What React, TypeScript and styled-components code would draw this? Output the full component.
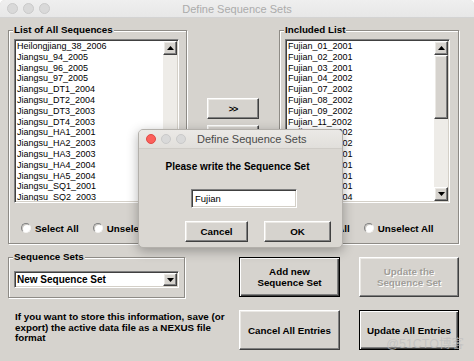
import React from "react";
import styled, { createGlobalStyle, css } from "styled-components";

const GlobalStyle = createGlobalStyle`
  html, body {
    margin: 0;
    padding: 0;
    background: #ffffff;
  }
  body {
    font-family: "Liberation Sans", Arial, sans-serif;
  }
`;

const allSequences = [
  "Heilongjiang_38_2006",
  "Jiangsu_94_2005",
  "Jiangsu_96_2005",
  "Jiangsu_97_2005",
  "Jiangsu_DT1_2004",
  "Jiangsu_DT2_2004",
  "Jiangsu_DT3_2003",
  "Jiangsu_DT4_2003",
  "Jiangsu_HA1_2001",
  "Jiangsu_HA2_2003",
  "Jiangsu_HA3_2003",
  "Jiangsu_HA4_2004",
  "Jiangsu_HA5_2004",
  "Jiangsu_SQ1_2001",
  "Jiangsu_SQ2_2003",
];

const includedList = [
  "Fujian_01_2001",
  "Fujian_02_2001",
  "Fujian_03_2001",
  "Fujian_04_2002",
  "Fujian_07_2002",
  "Fujian_08_2002",
  "Fujian_09_2002",
  "Fujian_11_2002",
  "Fujian_12_2002",
  "Fujian_13_2002",
  "Fujian_14_2001",
  "Fujian_15_2001",
  "Fujian_16_2001",
  "Fujian_17_2001",
  "Fujian_18_2004",
];

const FACE = "#d6d3ce";

const raised = css`
  background: ${FACE};
  border: 1px solid;
  border-color: #ffffff #404040 #404040 #ffffff;
  box-shadow: inset -1px -1px #808080, inset 1px 1px #ebe9e5;
  box-sizing: border-box;
`;

const sunken = css`
  background: #ffffff;
  border: 1px solid;
  border-color: #808080 #ffffff #ffffff #808080;
  box-shadow: inset 1px 1px #404040, inset -1px -1px #d4d0c8;
  box-sizing: border-box;
`;

function Arrow({ down }: { down?: boolean }) {
  return (
    <svg width="7" height="4" viewBox="0 0 7 4">
      <path d={down ? "M0 0h7L3.5 4z" : "M0 4h7L3.5 0z"} fill="#000" />
    </svg>
  );
}

function ListPanel({
  items,
  thumbTop,
  thumbHeight,
}: {
  items: string[];
  thumbTop: number;
  thumbHeight: number;
}) {
  return (
    <ListBox>
      <Items>
        {items.map((item) => (
          <Item key={item}>{item}</Item>
        ))}
      </Items>
      <ScrollBar>
        <ScrollButton>
          <Arrow />
        </ScrollButton>
        <Track $h={thumbTop} />
        <Thumb $h={thumbHeight} />
        <Track $grow />
        <ScrollButton>
          <Arrow down />
        </ScrollButton>
      </ScrollBar>
    </ListBox>
  );
}

function SelectRow() {
  return (
    <RadioRow>
      <RadioLabel>
        <RadioDot />
        Select All
      </RadioLabel>
      <RadioLabel>
        <RadioDot />
        Unselect All
      </RadioLabel>
    </RadioRow>
  );
}

export default function App() {
  return (
    <>
      <GlobalStyle />
      <Window>
        <TitleBar>
          <Lights>
            <Light />
            <Light />
            <Light />
          </Lights>
          <WindowTitle>Define Sequence Sets</WindowTitle>
          <span />
        </TitleBar>

        <Body>
          <TopRow>
            <GroupBox $w={179} $h={220}>
              <Legend>List of All Sequences</Legend>
              <ListPanel items={allSequences} thumbTop={75} thumbHeight={60} />
              <SelectRow />
            </GroupBox>

            <MoveColumn>
              <MoveButton>&gt;&gt;</MoveButton>
              <MoveButton>&lt;&lt;</MoveButton>
            </MoveColumn>

            <GroupBox $w={180} $h={220}>
              <Legend>Included List</Legend>
              <ListPanel items={includedList} thumbTop={0} thumbHeight={64} />
              <SelectRow />
            </GroupBox>
          </TopRow>

          <BottomRow>
            <LeftColumn>
              <GroupBox $w={177} $h={47} $pt={8}>
                <Legend>Sequence Sets</Legend>
                <Combo>
                  <ComboText>New Sequence Set</ComboText>
                  <ComboButton>
                    <Arrow down />
                  </ComboButton>
                </Combo>
              </GroupBox>
              <Info>
                If you want to store this information, save (or export) the
                active data file as a NEXUS file format
              </Info>
            </LeftColumn>

            <ButtonGrid>
              <PushButton $default>
                Add new
                <br />
                Sequence Set
              </PushButton>
              <PushButton $disabled>
                Update the
                <br />
                Sequence Set
              </PushButton>
              <PushButton>Cancel All Entries</PushButton>
              <PushButton $default>Update All Entries</PushButton>
            </ButtonGrid>
          </BottomRow>
        </Body>

        <Dialog>
          <DialogTitleBar>
            <DialogLights>
              <Light $color="#fc605b" $edge="#de4a45" $size={10} />
              <Light $size={10} />
              <Light $size={10} />
            </DialogLights>
            <DialogTitle>Define Sequence Sets</DialogTitle>
          </DialogTitleBar>
          <DialogBody>
            <Prompt>Please write the Sequence Set</Prompt>
            <NameInput>Fujian</NameInput>
            <DialogButtons>
              <PushButton $w={63} $h={21}>
                Cancel
              </PushButton>
              <PushButton $w={67} $h={21}>
                OK
              </PushButton>
            </DialogButtons>
          </DialogBody>
        </Dialog>

        <Watermark>@51CTO博客</Watermark>
      </Window>
    </>
  );
}

const Window = styled.div`
  position: relative;
  width: 474px;
  height: 361px;
  background: ${FACE};
  display: flex;
  flex-direction: column;
  overflow: hidden;
  border-radius: 5px 5px 0 0;
  font-family: "Liberation Sans", Arial, sans-serif;
  color: #000;
`;

const TitleBar = styled.div`
  flex: none;
  height: 18px;
  box-sizing: border-box;
  display: grid;
  grid-template-columns: 1fr auto 1fr;
  align-items: center;
  background: linear-gradient(#efefef, #e7e7e7);
  border-bottom: 1px solid #d3d3d3;
`;

const Lights = styled.div`
  display: flex;
  gap: 5px;
  padding-left: 7px;
`;

const Light = styled.span<{ $color?: string; $edge?: string; $size?: number }>`
  width: ${(p) => p.$size ?? 11}px;
  height: ${(p) => p.$size ?? 11}px;
  border-radius: 50%;
  box-sizing: border-box;
  background: ${(p) => p.$color ?? "#d9d9d9"};
  border: 1px solid ${(p) => p.$edge ?? "#c9c9c9"};
`;

const WindowTitle = styled.div`
  font-size: 11px;
  color: #ababab;
`;

const Body = styled.div`
  flex: 1;
  display: flex;
  flex-direction: column;
  padding: 6px 15px 0 8px;
`;

const TopRow = styled.div`
  display: flex;
  align-items: flex-start;
`;

const GroupBox = styled.fieldset<{ $w: number; $h: number; $pt?: number }>`
  margin: 0;
  min-width: 0;
  width: ${(p) => p.$w}px;
  height: ${(p) => p.$h}px;
  box-sizing: border-box;
  padding: ${(p) => p.$pt ?? 3}px 5px 0;
  border: 1px solid #8e8b86;
  box-shadow: inset 1px 1px #ffffff, 1px 1px #ffffff;
`;

const Legend = styled.legend`
  padding: 0 1px;
  margin-left: -1px;
  font-size: 9.8px;
  font-weight: bold;
  line-height: 12px;
  background: ${FACE};
`;

const ListBox = styled.div`
  ${sunken};
  width: 165px;
  height: 164px;
  padding: 1px;
  display: flex;
`;

const Items = styled.div`
  flex: 1;
  overflow: hidden;
  padding-left: 1px;
`;

const Item = styled.div`
  font-size: 9px;
  line-height: 10.8px;
  white-space: nowrap;
`;

const ScrollBar = styled.div`
  flex: none;
  width: 14px;
  display: flex;
  flex-direction: column;
  background: #eeece8;
`;

const ScrollButton = styled.div`
  ${raised};
  flex: none;
  height: 14px;
  display: flex;
  align-items: center;
  justify-content: center;
`;

const Track = styled.div<{ $h?: number; $grow?: boolean }>`
  flex: ${(p) => (p.$grow ? "1" : "none")};
  height: ${(p) => (p.$grow ? "auto" : `${p.$h ?? 0}px`)};
`;

const Thumb = styled.div<{ $h: number }>`
  ${raised};
  flex: none;
  height: ${(p) => p.$h}px;
`;

const RadioRow = styled.div`
  display: flex;
  gap: 14px;
  margin-top: 19px;
  padding-left: 7px;
  height: 12px;
  align-items: center;
`;

const RadioLabel = styled.label`
  display: flex;
  align-items: center;
  gap: 4px;
  font-size: 9.8px;
  font-weight: bold;
  white-space: nowrap;
`;

const RadioDot = styled.span`
  width: 10px;
  height: 10px;
  border-radius: 50%;
  box-sizing: border-box;
  background: #ffffff;
  border: 1px solid;
  border-color: #808080 #f4f3f1 #f4f3f1 #808080;
  box-shadow: inset 1px 1px #c9c6c1;
`;

const MoveColumn = styled.div`
  width: 92px;
  flex: none;
  display: flex;
  flex-direction: column;
  align-items: center;
  gap: 6px;
  padding-top: 74px;
`;

const MoveButton = styled.div`
  ${raised};
  width: 52px;
  height: 21px;
  display: flex;
  align-items: center;
  justify-content: center;
  font-size: 9px;
  font-weight: bold;
  letter-spacing: -1px;
`;

const BottomRow = styled.div`
  display: flex;
  align-items: flex-start;
  padding-top: 7px;
`;

const LeftColumn = styled.div`
  width: 231px;
  flex: none;
  display: flex;
  flex-direction: column;
`;

const Combo = styled.div`
  ${sunken};
  width: 165px;
  height: 17px;
  padding: 1px;
  display: flex;
  align-items: stretch;
`;

const ComboText = styled.div`
  flex: 1;
  font-size: 10px;
  font-weight: bold;
  line-height: 13px;
  padding-left: 1px;
`;

const ComboButton = styled.div`
  ${raised};
  width: 14px;
  display: flex;
  align-items: center;
  justify-content: center;
`;

const Info = styled.p`
  margin: 14px 0 0;
  padding-left: 7px;
  width: 222px;
  font-size: 9.8px;
  font-weight: bold;
  line-height: 10.5px;
`;

const ButtonGrid = styled.div`
  display: grid;
  grid-template-columns: 101px 100px;
  grid-template-rows: 40px 40px;
  column-gap: 19px;
  row-gap: 13px;
  margin-top: 6px;
`;

const PushButton = styled.div<{
  $default?: boolean;
  $disabled?: boolean;
  $w?: number;
  $h?: number;
}>`
  ${raised};
  ${(p) => p.$w && `width: ${p.$w}px;`}
  ${(p) => p.$h && `height: ${p.$h}px;`}
  display: flex;
  align-items: center;
  justify-content: center;
  text-align: center;
  font-size: 9.8px;
  font-weight: bold;
  line-height: 11px;
  color: #000;
  ${(p) =>
    p.$default &&
    css`
      border: 1px solid #000;
      box-shadow: inset 1px 1px #ffffff, inset -1px -1px #404040,
        inset -2px -2px #808080;
    `}
  ${(p) =>
    p.$disabled &&
    css`
      color: #a19e99;
      text-shadow: 1px 1px #ffffff;
    `}
`;

const Dialog = styled.div`
  position: absolute;
  left: 138px;
  top: 129px;
  width: 205px;
  height: 119px;
  box-sizing: border-box;
  display: flex;
  flex-direction: column;
  background: #dad7d2;
  border: 1px solid #b3b0ab;
  border-radius: 5px;
  box-shadow: 0 3px 12px rgba(0, 0, 0, 0.3);
  overflow: hidden;
`;

const DialogTitleBar = styled.div`
  flex: none;
  height: 19px;
  display: flex;
  align-items: center;
  background: linear-gradient(#ebe9e6, #e1dfdb);
  border-bottom: 1px solid #cfccc7;
  box-sizing: border-box;
`;

const DialogLights = styled(Lights)`
  padding-left: 7px;
`;

const DialogTitle = styled.div`
  margin-left: 11px;
  font-size: 11px;
  color: #4a4a4a;
`;

const DialogBody = styled.div`
  flex: 1;
  display: flex;
  flex-direction: column;
  align-items: flex-start;
`;

const Prompt = styled.div`
  align-self: center;
  margin-top: 12px;
  font-size: 10px;
  font-weight: bold;
  line-height: 12px;
  margin-left: -6px;
`;

const NameInput = styled.div`
  ${sunken};
  margin: 16px 0 0 52px;
  width: 106px;
  height: 19px;
  padding: 2px 3px;
  font-size: 9.5px;
  line-height: 14px;
`;

const DialogButtons = styled.div`
  display: flex;
  gap: 16px;
  margin: 13px 0 0 46px;
`;

const Watermark = styled.div`
  position: absolute;
  right: 10px;
  bottom: 9px;
  font-family: "Liberation Sans", "Noto Sans CJK SC", sans-serif;
  font-size: 12.5px;
  color: rgba(190, 190, 190, 0.75);
  pointer-events: none;
`;
